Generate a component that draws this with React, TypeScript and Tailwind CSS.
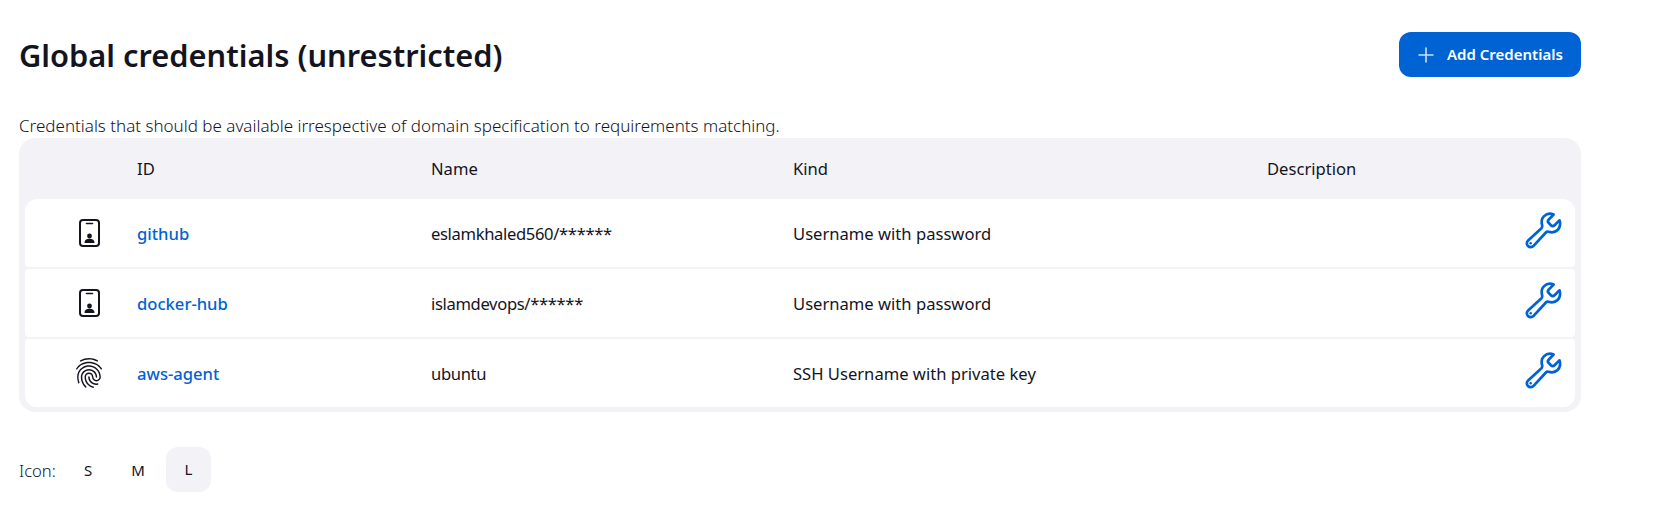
import { IoBuildOutline, IoFingerPrintOutline } from "react-icons/io5";

const credentials = [
  { id: "github", name: "eslamkhaled560/******", kind: "Username with password", icon: "card" },
  { id: "docker-hub", name: "islamdevops/******", kind: "Username with password", icon: "card" },
  { id: "aws-agent", name: "ubuntu", kind: "SSH Username with private key", icon: "finger" },
];

function CardIcon() {
  return (
    <svg width="21" height="28" viewBox="0 0 21 28" fill="none">
      <rect x="1" y="1" width="19" height="26" rx="3" stroke="#14141f" strokeWidth="2" />
      <path d="M7.5 4.5h6" stroke="#14141f" strokeWidth="1.6" strokeLinecap="round" />
      <circle cx="10.5" cy="17" r="2.4" fill="#14141f" />
      <path d="M5.5 24c0-3 2.2-4.2 5-4.2s5 1.2 5 4.2z" fill="#14141f" />
    </svg>
  );
}

export default function App() {
  return (
    <div className="w-[1668px] h-[517px] bg-white pl-[19px] pt-[32px] font-['Noto_Sans',sans-serif] text-[#14141f]">
      <div className="w-[1562px]">
        <div className="flex items-center justify-between h-[45px]">
          <h1 className="pt-[1px] text-[30.8px] font-semibold leading-[45px]">Global credentials (unrestricted)</h1>
          <button className="flex items-center h-[45px] w-[182px] rounded-[12px] bg-[#0063d3] pl-[18px] text-[15px] font-semibold text-white">
            <svg width="18" height="18" viewBox="0 0 18 18" fill="none" className="mr-[12px] opacity-80">
              <path d="M9 2v14M2 9h14" stroke="white" strokeWidth="1.6" strokeLinecap="round" />
            </svg>
            Add Credentials
          </button>
        </div>

        <p className="mt-[36px] h-[25px] text-[17px] leading-[25px] font-light">
          Credentials that should be available irrespective of domain specification to requirements matching.
        </p>

        <div className="rounded-[16px] bg-[#f2f2f7] px-[6px] pb-[5px]">
          <div className="flex h-[61px] items-center pt-[2px] text-[16.6px]">
            <div className="w-[112px]" />
            <div className="w-[294px]">ID</div>
            <div className="w-[362px]">Name</div>
            <div className="w-[474px]">Kind</div>
            <div>Description</div>
          </div>
          <div className="flex flex-col gap-[2px]">
            {credentials.map((c) => (
              <div
                key={c.id}
                className="flex h-[68px] items-center rounded-[4px] bg-white text-[16.6px] first:rounded-t-[12px] last:rounded-b-[12px]"
              >
                <div className="flex w-[112px] justify-center pl-[16px]">
                  {c.icon === "card" ? <CardIcon /> : <IoFingerPrintOutline size={32} color="#14141f" />}
                </div>
                <a className="w-[294px] pt-[3px] font-medium text-[#0063d3]">{c.id}</a>
                <div className="w-[362px] pt-[3px] tracking-[-0.35px]">{c.name}</div>
                <div className="w-[474px] pt-[3px]">{c.kind}</div>
                <div className="flex-1" />
                <IoBuildOutline size={41} color="#0063d3" className="mr-[11px] mb-[6px] [&_path]:stroke-[34]" />
              </div>
            ))}
          </div>
        </div>

        <div className="mt-[35px] flex items-center text-[16.6px]">
          <span className="mr-[3px] w-[44px] pt-[3px] font-light">Icon:</span>
          <div className="flex gap-[5px]">
            <button className="h-[45px] w-[45px] pt-[2px] pr-[1px] text-[15px]">S</button>
            <button className="h-[45px] w-[45px] pt-[2px] pr-[1px] text-[15px]">M</button>
            <button className="h-[45px] w-[45px] rounded-[12px] bg-[#f2f2f7] text-[15px]">L</button>
          </div>
        </div>
      </div>
    </div>
  );
}
